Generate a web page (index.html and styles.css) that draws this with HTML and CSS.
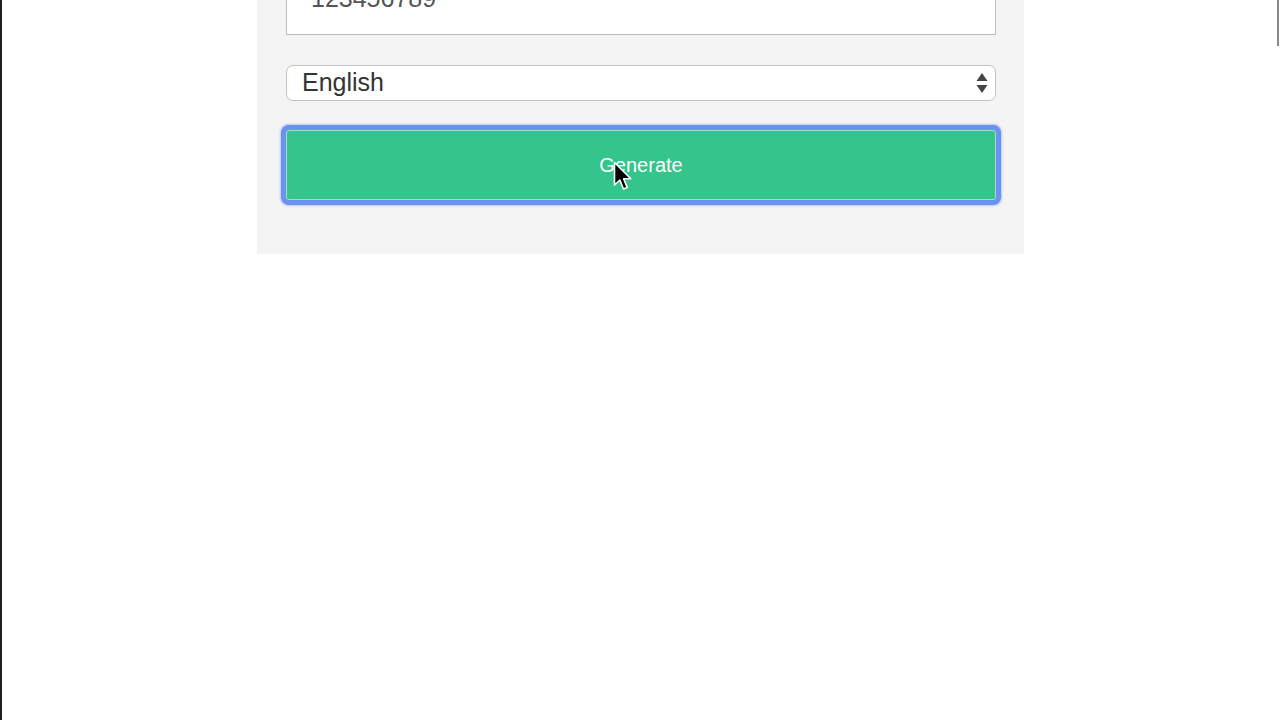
FILE: index.html
```html
<!DOCTYPE html>
<html>
<head>
<meta charset="utf-8">
<link rel="stylesheet" href="styles.css">
</head>
<body>
<div class="page">
  <div class="panel">
    <div class="field-input">123456789</div>
    <div class="select-wrap">
      <div class="select">English</div>
      <svg class="arrows" width="12" height="22" viewBox="0 0 12 22"><path d="M6 1 L11.5 9 L0.5 9 Z" fill="#444"/><path d="M6 21 L11.5 13 L0.5 13 Z" fill="#444"/></svg>
    </div>
    <button class="generate">Generate</button>
  </div>
  <div class="scroll-thumb"></div>
  <svg class="cursor" width="22" height="32" viewBox="0 0 22 32"><path d="M1.5 1.5 L1.5 24 L6.8 19 L10.5 28 L14.2 26.4 L10.6 17.8 L17.8 17.8 Z" fill="#000" stroke="#fff" stroke-width="1.6" stroke-linejoin="round"/></svg>
</div>
</body>
</html>
```
FILE: styles.css
```css
html, body {
  margin: 0;
  padding: 0;
  background: #fff;
  height: 100%;
  overflow: hidden;
}
.page {
  position: relative;
  display: flow-root;
  height: 720px;
  border-left: 2px solid #1e1e1e;
  box-sizing: border-box;
  font-family: "Liberation Sans", Arial, sans-serif;
}
.panel {
  width: 767px;
  margin: -40px 0 0 255px;
  background: #f4f4f4;
  padding: 0 28px 54px 29px;
  box-sizing: border-box;
  display: flex;
  flex-direction: column;
}
.field-input {
  height: 75px;
  box-sizing: border-box;
  background: #fff;
  border: 1px solid #bdbdbd;
  border-top: none;
  font-size: 25px;
  color: #555;
  padding: 25px 0 0 24px;
  line-height: 26px;
}
.select-wrap {
  position: relative;
  margin-top: 30px;
}
.select {
  height: 36px;
  box-sizing: border-box;
  background: #fff;
  border: 1px solid #c2c2c2;
  border-radius: 7px;
  font-size: 25px;
  color: #333;
  line-height: 32px;
  padding-left: 15px;
}
.arrows {
  position: absolute;
  right: 8px;
  top: 7px;
}
.generate {
  margin-top: 29px;
  height: 70px;
  width: 100%;
  background: #35c48b;
  border: 1px solid #a6dcc6;
  border-radius: 3px;
  color: #fff;
  font-family: "Liberation Sans", Arial, sans-serif;
  font-size: 20px;
  padding: 0;
  box-shadow: 0 0 0 5px #6a92ee, 0 0 2px 6px rgba(120, 155, 240, 0.5);
}
.scroll-thumb {
  position: absolute;
  right: 1px;
  top: 0;
  width: 2px;
  height: 46px;
  background: #8a8a8a;
}
.cursor {
  position: absolute;
  left: 611px;
  top: 161px;
}
```
